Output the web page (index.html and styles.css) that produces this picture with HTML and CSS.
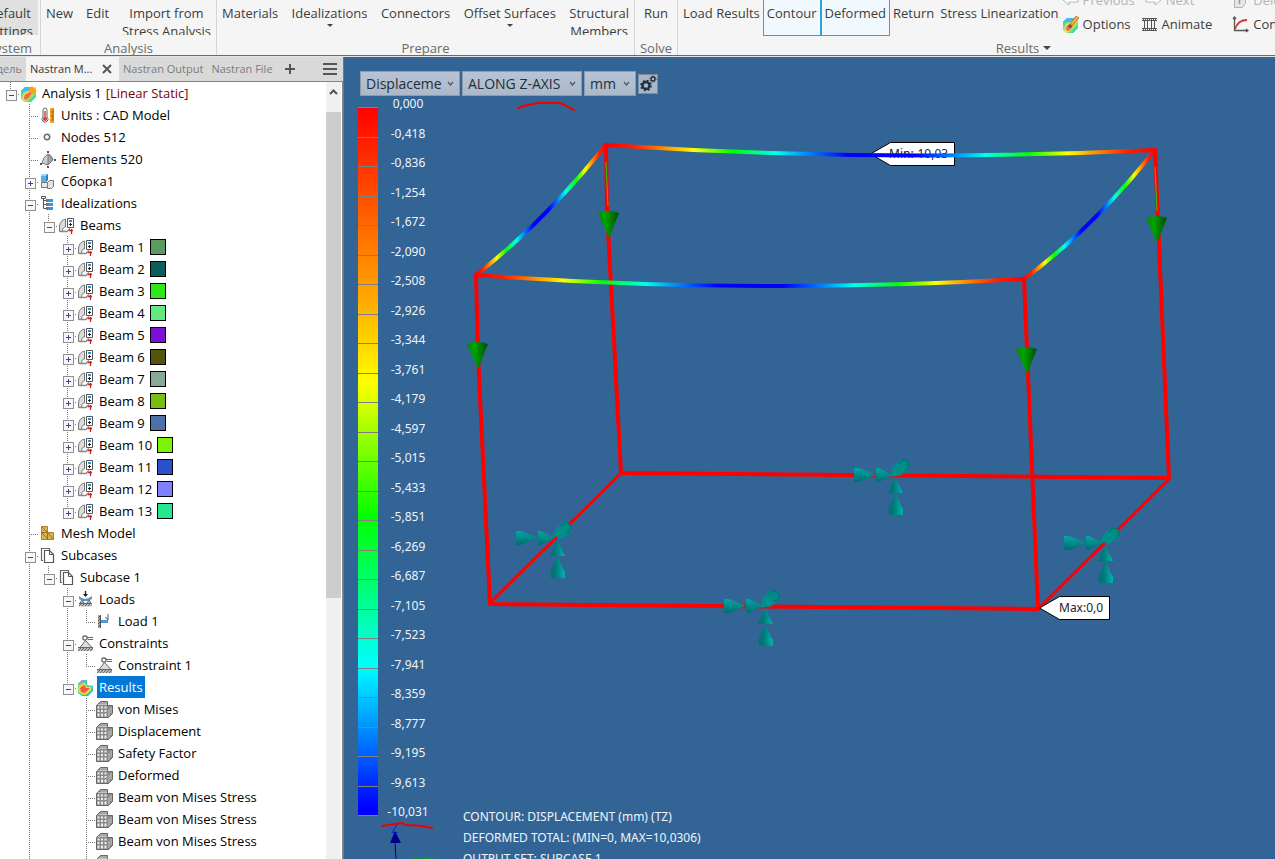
FILE: index.html
```html
<!DOCTYPE html>
<html lang="en">
<head>
<meta charset="utf-8">
<title>Nastran Analysis</title>
<link rel="stylesheet" href="styles.css">
</head>
<body>
<svg class="defs" aria-hidden="true">
  <defs>
    <linearGradient id="heat" x1="0" y1="0" x2="1" y2="1">
      <stop offset="0" stop-color="#2fa8e8"/><stop offset=".3" stop-color="#5fe0a0"/><stop offset=".55" stop-color="#e8e840"/><stop offset=".8" stop-color="#30d8a0"/><stop offset="1" stop-color="#10b8e0"/>
    </linearGradient>
    <symbol id="i-cube" viewBox="0 0 17 17">
      <path d="M1 6 5 2h8l3 2v8l-5 5H4l-3-3z" fill="url(#heat)"/>
      <path d="M1 6 5 2h8l-4 4H1z" fill="#48b8e8"/>
      <path d="M3 13q-1-5 4-6 4-3 6-2-1 8-8 11-2-1-2-3z" fill="#f4e23c"/>
      <path d="M4 13q0-4 4-5 3-2 4-1-1 5-6 8-2 0-2-2z" fill="#f06a50"/>
    </symbol>
    <symbol id="i-analysis" viewBox="0 0 17 17">
      <use href="#i-cube" width="17" height="17"/>
      <path d="M12 0l1 3 3-1-1 3 2 1-2 1 1 3-3-2-2 2V7L8 6l2-1-1-3 2 1z" fill="#f7a21b"/>
    </symbol>
    <symbol id="i-results" viewBox="0 0 17 17">
      <path d="M1 5 5 1h5v5l6 1v5l-5 5H5l-4-3z" fill="#18c4d8"/>
      <path d="M1 5 5 1h5L8 5z" fill="#74a9e0"/>
      <path d="M1 6l7-3 2 4 5 1-1 4-5 4H5l-4-3z" fill="#a6e04a"/>
      <path d="M2 8l5-4 2 4 6 0-3 5-4 2H5l-3-2z" fill="#f6d432"/>
      <path d="M3 9l4-3 2 3 4 0-3 3-3 2-3-1z" fill="#f05a4e"/>
    </symbol>
    <symbol id="i-units" viewBox="0 0 17 17">
      <rect x="11" y="1" width="4" height="15" fill="#f2a71d"/><path d="M13 3h2M12 5h3M13 7h2M12 9h3M13 11h2M12 13h3" stroke="#8a5a00"/>
      <path d="M4 10V3a2 2 0 0 1 4 0v7a3 3 0 1 1-4 0z" fill="#fff" stroke="#666"/><circle cx="6" cy="12" r="2" fill="#d83a3a"/><path d="M6 4v8" stroke="#d83a3a" stroke-width="1.4"/>
    </symbol>
    <symbol id="i-node" viewBox="0 0 17 17"><circle cx="8" cy="8" r="2.7" fill="#fff" stroke="#666" stroke-width="1.5"/></symbol>
    <symbol id="i-element" viewBox="0 0 17 17">
      <path d="M9 3Q4 6 3 12l6 2 5-5Q13 5 9 3z" fill="#cfcfcf" stroke="#777"/><path d="M9 3v11l5-5q-1-4-5-6z" fill="#a4a4a4" stroke="#777"/>
      <path d="M8 0h2v2H8zM1 12h2v2H1zM8 15h2v2H8zM15 8h2v2h-2z" fill="#555"/>
    </symbol>
    <symbol id="i-assembly" viewBox="0 0 17 17">
      <path d="M8.500 9.500l2-2h4v6l-2 2h-4z" fill="#e2e2e2" stroke="#777"/><path d="M2.500 9.500h6v5h-6z" fill="#e8e8e8" stroke="#777"/>
      <path d="M2 3 4 1h5v6L7 9H2z" fill="#5aaee8"/><path d="M2 3 4 1h5L7 3z" fill="#9dd2f4"/><path d="M7 3l2-2v6L7 9z" fill="#2b80bf"/>
    </symbol>
    <symbol id="i-ideal" viewBox="0 0 17 17">
      <path d="M2.500 1.500h4v2h-4zM4.500 3.500v10h4M5 5.500h3M5 9.500h3" fill="none" stroke="#555"/>
      <path d="M8 4h6v3H8zM8 8h6v3H8zM8 12h6v3H8z" fill="#3c92d4"/><path d="M7 4h2v3H7zM7 8h2v3H7zM7 12h2v3H7z" fill="#777"/>
    </symbol>
    <symbol id="i-beam" viewBox="0 0 17 17">
      <path d="M1.500 14.500V9q1-6 6-7v8q-3 0-3 4.500z" fill="#ddd" stroke="#777"/><path d="M2 14.500h7l3-3" fill="none" stroke="#888" stroke-width="1.500"/>
      <path d="M9.500 1.500h6v9h-6z" fill="#fff" stroke="#555"/><path d="M11 3h3v2h-3z" fill="#2c8ee0"/><path d="M11 7.500h3M12.500 6v3" stroke="#222"/>
      <path d="M11 13.500h4M13.500 12v5" stroke="#d02020" stroke-width="1.300"/>
    </symbol>
    <symbol id="i-mesh" viewBox="0 0 17 17">
      <path d="M2.500 1.500h6v6h6v7h-12z" fill="#d9b454" stroke="#a88428"/><path d="M2.500 7.500h6v7M3 2l5 5M3 8l6 6M9 8l5 6" fill="none" stroke="#94711c"/>
    </symbol>
    <symbol id="i-case" viewBox="0 0 17 17">
      <path d="M4 13.500H2.500v-12h8v2" fill="none" stroke="#666" stroke-width="1.200"/><path d="M5.500 3.500h5l4 4v8h-9z" fill="#fff" stroke="#555" stroke-width="1.200"/><path d="M10.500 3.500v4h4" fill="none" stroke="#555"/>
    </symbol>
    <symbol id="i-loads" viewBox="0 0 17 17">
      <path d="M8.500 0v5" stroke="#222" stroke-width="1.400"/><path d="M6 3h5L8.500 6z" fill="#222"/>
      <path d="M2 5q3 3 6 3t7-3v3l-4 2H6L2 8z" fill="#4a9ad4"/><path d="M5 9l-2 3h4zM12 9l-2 3h4z" fill="#ddd" stroke="#666"/>
      <path d="M2 12.500h13v3H2z" fill="#bbb"/><path d="M2 15l3-3M5 15l3-3M8 15l3-3M11 15l3-3M2 12.500h13" stroke="#666"/>
    </symbol>
    <symbol id="i-load" viewBox="0 0 17 17">
      <path d="M2 2h2v13H2z" fill="#aaa"/><path d="M2 5l2-2M2 8l2-2M2 11l2-2M2 14l2-2M4.500 2v13" stroke="#555"/>
      <path d="M5 7h7v3H5z" fill="#4a9ad4"/><path d="M12 1v6M9.500 4 12 7" fill="none" stroke="#555"/>
    </symbol>
    <symbol id="i-constraint" viewBox="0 0 17 17">
      <circle cx="8" cy="3" r="2.200" fill="#fff" stroke="#555" stroke-width="1.200"/><path d="M10 2.500h6M11 4.500h5" stroke="#666"/>
      <path d="M8.500 5.500 3 12.500h12z" fill="#ddd" stroke="#666"/><path d="M1 13h15v3H1z" fill="#bbb"/><path d="M1 16l3-3M4 16l3-3M7 16l3-3M10 16l3-3M13 16l3-3M1 12.500h15" stroke="#666"/>
    </symbol>
    <symbol id="i-plot" viewBox="0 0 17 17">
      <path d="M.5 4.500 4.500.5h7v4h5v8l-4 4H.5z" fill="#8b8b8b" stroke="#666"/>
      <path d="M1.500 5.500h2v2h-2zM5 5.500h2v2H5zM8.500 5.500h2v2h-2zM1.500 9h2v2h-2zM5 9h2v2H5zM8.500 9h2v2h-2zM1.500 12.500h2v3h-2zM5 12.500h2v3H5zM8.500 12.500h2v3h-2zM4 2.500h2M8 2.500h2" fill="#eee"/>
      <path d="M2 3.500h9M13 8v7M15 6v6M4 2h7" stroke="#ddd" stroke-width=".7"/>
    </symbol>
    <symbol id="i-film" viewBox="0 0 17 17">
      <path d="M1 3.500h15M1 13.500h15" stroke="#555" stroke-width="3"/><path d="M1 3.500h15M1 13.500h15" stroke="#fff" stroke-dasharray="1 1"/><path d="M3.500 5v7M6.500 5v7M10.500 5v7M13.500 5v7" stroke="#555"/>
    </symbol>
    <symbol id="i-graph" viewBox="0 0 17 17">
      <path d="M2.500 1v13.500H16M1 3l1.500-2L4 3M14 13l2 1.500-2 1.500" fill="none" stroke="#555" stroke-width="1.300"/><path d="M3 13q3-9 12-9" fill="none" stroke="#c8383c" stroke-width="1.800"/>
    </symbol>
    <symbol id="i-brush" viewBox="0 0 17 17">
      <use href="#i-cube" width="17" height="17"/><path d="M8 8l6-8 3 2-7 8z" fill="#f0b040" stroke="#9c6420" stroke-width=".7"/><path d="M6 11l2-3 2 2-1 2z" fill="#555"/>
    </symbol>
    <symbol id="i-prev" viewBox="0 0 17 17"><path d="M1 8l6-5v3h9v4H7v3z" fill="#fff" stroke="#b4b4b4"/></symbol>
    <symbol id="i-next" viewBox="0 0 17 17"><path d="M16 8l-6-5v3H1v4h9v3z" fill="#fff" stroke="#b4b4b4"/></symbol>
    <symbol id="i-del" viewBox="0 0 17 17"><path d="M2.500 4.500h9l2-2v9l-3 4h-8z" fill="#e6e6e6" stroke="#b4b4b4"/><path d="M7.500 7v5" stroke="#999" stroke-width="1.500"/></symbol>
    <symbol id="i-gears" viewBox="0 0 17 17">
      <circle cx="6" cy="10.500" r="3.500" fill="none" stroke="#20303f" stroke-width="2.400"/><circle cx="6" cy="10.500" r="5" fill="none" stroke="#20303f" stroke-width="1.600" stroke-dasharray="2 1.930"/>
      <circle cx="13" cy="4" r="2" fill="none" stroke="#20303f" stroke-width="1.300"/><circle cx="13" cy="4" r="3" fill="none" stroke="#20303f" stroke-dasharray="1.200 1.150"/>
    </symbol>
  </defs>
</svg>

<div class="app">
  <header class="ribbon">
    <section class="group group--system">
      <div class="group__tools"><button class="tool tool--pressed"><span>Default</span><span>Settings</span></button></div>
      <h2 class="group__title">System</h2>
    </section>
    <section class="group group--analysis">
      <div class="group__tools"><button class="tool">New</button><button class="tool">Edit</button><button class="tool"><span>Import from</span><span>Stress Analysis</span></button></div>
      <h2 class="group__title">Analysis</h2>
    </section>
    <section class="group group--prepare">
      <div class="group__tools"><button class="tool">Materials</button><button class="tool">Idealizations<span class="caret"></span></button><button class="tool">Connectors</button><button class="tool">Offset Surfaces<span class="caret"></span></button><button class="tool"><span>Structural</span><span>Members</span></button></div>
      <h2 class="group__title">Prepare</h2>
    </section>
    <section class="group group--solve">
      <div class="group__tools"><button class="tool">Run</button></div>
      <h2 class="group__title">Solve</h2>
    </section>
    <section class="group group--results">
      <div class="group__tools">
        <button class="tool">Load Results</button><button class="tool tool--on">Contour</button><button class="tool tool--on">Deformed</button><button class="tool">Return</button><button class="tool">Stress Linearization</button>
        <div class="stack">
          <div class="stack__row"><button class="mini" disabled><svg class="icon"><use href="#i-prev"/></svg>Previous</button><button class="mini" disabled><svg class="icon"><use href="#i-next"/></svg>Next</button></div>
          <div class="stack__row"><button class="mini"><svg class="icon"><use href="#i-brush"/></svg>Options</button><button class="mini"><svg class="icon"><use href="#i-film"/></svg>Animate</button></div>
        </div>
        <div class="stack">
          <div class="stack__row"><button class="mini" disabled><svg class="icon"><use href="#i-del"/></svg>Delete</button></div>
          <div class="stack__row"><button class="mini"><svg class="icon"><use href="#i-graph"/></svg>Convergence</button></div>
        </div>
      </div>
      <h2 class="group__title">Results<span class="caret caret--big"></span></h2>
    </section>
  </header>

  <main class="workspace">
    <aside class="browser">
      <nav class="tabs">
        <button class="tab tab--model"><span>Модель</span></button>
        <button class="tab tab--active">Nastran M...<svg class="tab__close" viewBox="0 0 10 10"><path d="M1 1l8 8M9 1 1 9"/></svg></button>
        <button class="tab">Nastran Output</button>
        <button class="tab">Nastran File</button>
        <button class="tabs__add" aria-label="Add tab"><svg viewBox="0 0 10 10"><path d="M5 0v10M0 5h10"/></svg></button>
        <button class="tabs__menu" aria-label="Menu"><svg viewBox="0 0 14 12"><path d="M0 1h14M0 6h14M0 11h14"/></svg></button>
      </nav>
      <div class="browser__body">
        <ul class="tree">
          <li class="node node--end"><div class="row"><button class="exp exp--minus" aria-label="Collapse"></button><svg class="icon"><use href="#i-analysis"/></svg><span class="label">Analysis 1</span><span class="note">[Linear Static]</span></div>
            <ul>
              <li class="node"><div class="row"><i class="stub"></i><svg class="icon"><use href="#i-units"/></svg><span class="label">Units : CAD Model</span></div></li>
              <li class="node"><div class="row"><i class="stub"></i><svg class="icon"><use href="#i-node"/></svg><span class="label">Nodes 512</span></div></li>
              <li class="node"><div class="row"><i class="stub"></i><svg class="icon"><use href="#i-element"/></svg><span class="label">Elements 520</span></div></li>
              <li class="node"><div class="row"><button class="exp" aria-label="Expand"></button><svg class="icon"><use href="#i-assembly"/></svg><span class="label">Сборка1</span></div></li>
              <li class="node"><div class="row"><button class="exp exp--minus" aria-label="Collapse"></button><svg class="icon"><use href="#i-ideal"/></svg><span class="label">Idealizations</span></div>
                <ul><li class="node node--end"><div class="row"><button class="exp exp--minus" aria-label="Collapse"></button><svg class="icon"><use href="#i-beam"/></svg><span class="label">Beams</span></div>
                  <ul>
                    <li class="node"><div class="row"><button class="exp" aria-label="Expand"></button><svg class="icon"><use href="#i-beam"/></svg><span class="label">Beam 1</span><span class="swatch" style="background:#5b9a60"></span></div></li>
                    <li class="node"><div class="row"><button class="exp" aria-label="Expand"></button><svg class="icon"><use href="#i-beam"/></svg><span class="label">Beam 2</span><span class="swatch" style="background:#0d5c5c"></span></div></li>
                    <li class="node"><div class="row"><button class="exp" aria-label="Expand"></button><svg class="icon"><use href="#i-beam"/></svg><span class="label">Beam 3</span><span class="swatch" style="background:#2ee81c"></span></div></li>
                    <li class="node"><div class="row"><button class="exp" aria-label="Expand"></button><svg class="icon"><use href="#i-beam"/></svg><span class="label">Beam 4</span><span class="swatch" style="background:#64e880"></span></div></li>
                    <li class="node"><div class="row"><button class="exp" aria-label="Expand"></button><svg class="icon"><use href="#i-beam"/></svg><span class="label">Beam 5</span><span class="swatch" style="background:#7c10d4"></span></div></li>
                    <li class="node"><div class="row"><button class="exp" aria-label="Expand"></button><svg class="icon"><use href="#i-beam"/></svg><span class="label">Beam 6</span><span class="swatch" style="background:#54540c"></span></div></li>
                    <li class="node"><div class="row"><button class="exp" aria-label="Expand"></button><svg class="icon"><use href="#i-beam"/></svg><span class="label">Beam 7</span><span class="swatch" style="background:#88a898"></span></div></li>
                    <li class="node"><div class="row"><button class="exp" aria-label="Expand"></button><svg class="icon"><use href="#i-beam"/></svg><span class="label">Beam 8</span><span class="swatch" style="background:#78bc14"></span></div></li>
                    <li class="node"><div class="row"><button class="exp" aria-label="Expand"></button><svg class="icon"><use href="#i-beam"/></svg><span class="label">Beam 9</span><span class="swatch" style="background:#4c70a8"></span></div></li>
                    <li class="node"><div class="row"><button class="exp" aria-label="Expand"></button><svg class="icon"><use href="#i-beam"/></svg><span class="label">Beam 10</span><span class="swatch" style="background:#7cf408"></span></div></li>
                    <li class="node"><div class="row"><button class="exp" aria-label="Expand"></button><svg class="icon"><use href="#i-beam"/></svg><span class="label">Beam 11</span><span class="swatch" style="background:#2c50cc"></span></div></li>
                    <li class="node"><div class="row"><button class="exp" aria-label="Expand"></button><svg class="icon"><use href="#i-beam"/></svg><span class="label">Beam 12</span><span class="swatch" style="background:#8080fc"></span></div></li>
                    <li class="node node--end"><div class="row"><button class="exp" aria-label="Expand"></button><svg class="icon"><use href="#i-beam"/></svg><span class="label">Beam 13</span><span class="swatch" style="background:#24e890"></span></div></li>
                  </ul></li></ul>
              </li>
              <li class="node"><div class="row"><i class="stub"></i><svg class="icon"><use href="#i-mesh"/></svg><span class="label">Mesh Model</span></div></li>
              <li class="node"><div class="row"><button class="exp exp--minus" aria-label="Collapse"></button><svg class="icon"><use href="#i-case"/></svg><span class="label">Subcases</span></div>
                <ul><li class="node node--end"><div class="row"><button class="exp exp--minus" aria-label="Collapse"></button><svg class="icon"><use href="#i-case"/></svg><span class="label">Subcase 1</span></div>
                  <ul>
                    <li class="node"><div class="row"><button class="exp exp--minus" aria-label="Collapse"></button><svg class="icon"><use href="#i-loads"/></svg><span class="label">Loads</span></div>
                      <ul><li class="node node--end"><div class="row"><i class="stub"></i><svg class="icon"><use href="#i-load"/></svg><span class="label">Load 1</span></div></li></ul></li>
                    <li class="node"><div class="row"><button class="exp exp--minus" aria-label="Collapse"></button><svg class="icon"><use href="#i-constraint"/></svg><span class="label">Constraints</span></div>
                      <ul><li class="node node--end"><div class="row"><i class="stub"></i><svg class="icon"><use href="#i-constraint"/></svg><span class="label">Constraint 1</span></div></li></ul></li>
                    <li class="node node--end"><div class="row"><button class="exp exp--minus" aria-label="Collapse"></button><svg class="icon"><use href="#i-results"/></svg><span class="label label--selected">Results</span></div>
                      <ul>
                        <li class="node"><div class="row"><i class="stub"></i><svg class="icon"><use href="#i-plot"/></svg><span class="label">von Mises</span></div></li>
                        <li class="node"><div class="row"><i class="stub"></i><svg class="icon"><use href="#i-plot"/></svg><span class="label">Displacement</span></div></li>
                        <li class="node"><div class="row"><i class="stub"></i><svg class="icon"><use href="#i-plot"/></svg><span class="label">Safety Factor</span></div></li>
                        <li class="node"><div class="row"><i class="stub"></i><svg class="icon"><use href="#i-plot"/></svg><span class="label">Deformed</span></div></li>
                        <li class="node"><div class="row"><i class="stub"></i><svg class="icon"><use href="#i-plot"/></svg><span class="label">Beam von Mises Stress</span></div></li>
                        <li class="node"><div class="row"><i class="stub"></i><svg class="icon"><use href="#i-plot"/></svg><span class="label">Beam von Mises Stress</span></div></li>
                        <li class="node"><div class="row"><i class="stub"></i><svg class="icon"><use href="#i-plot"/></svg><span class="label">Beam von Mises Stress</span></div></li>
                        <li class="node"><div class="row"><i class="stub"></i><svg class="icon"><use href="#i-plot"/></svg><span class="label">Beam von Mises Stress</span></div></li>
                      </ul></li>
                  </ul></li></ul>
              </li>
            </ul>
          </li>
        </ul>
        <div class="scroll"><button class="scroll__up" aria-label="Scroll up"><svg viewBox="0 0 9 6"><path d="M1 5l3.500-3.500L8 5"/></svg></button><div class="scroll__thumb"></div></div>
      </div>
    </aside>

    <section class="viewport">
      <svg class="scene" viewBox="344 57 931 802">
        <defs>
          <linearGradient id="ramp">
            <stop offset="0" stop-color="#f00"/><stop offset=".05" stop-color="#ff2000"/><stop offset=".1" stop-color="#ff8000"/><stop offset=".16" stop-color="#ff0"/><stop offset=".23" stop-color="#0f0"/><stop offset=".31" stop-color="#0fe"/><stop offset=".37" stop-color="#0080ff"/><stop offset=".44" stop-color="#00f"/>
            <stop offset=".56" stop-color="#00f"/><stop offset=".63" stop-color="#0080ff"/><stop offset=".69" stop-color="#0fe"/><stop offset=".77" stop-color="#0f0"/><stop offset=".84" stop-color="#ff0"/><stop offset=".9" stop-color="#ff8000"/><stop offset=".95" stop-color="#ff2000"/><stop offset="1" stop-color="#f00"/>
          </linearGradient>
          <linearGradient id="cone"><stop offset="0" stop-color="#008c00"/><stop offset=".35" stop-color="#00a400"/><stop offset="1" stop-color="#004c00"/></linearGradient>
          <linearGradient id="tealV"><stop offset="0" stop-color="#007070"/><stop offset=".4" stop-color="#007c7c"/><stop offset="1" stop-color="#00b4b0"/></linearGradient>
          <linearGradient id="tealH" x2="0" y2="1"><stop offset="0" stop-color="#00a8a4"/><stop offset="1" stop-color="#006c70"/></linearGradient>
          <g id="force"><path d="M-10-13Q0-17 11-13L1 12z" fill="url(#cone)"/></g>
          <g id="fix">
            <path d="M-41-7h4q3 0 3 7t-3 7h-4z" fill="url(#tealH)"/><path d="M-36-7-19 0l-17 7z" fill="url(#tealH)"/><path d="M-19-7h3L-2 0l-14 7h-3z" fill="url(#tealH)"/>
            <path d="M-7 18 0 2l8 16z" fill="url(#tealV)"/><path d="M-6 33h14v7H-6z" fill="url(#tealV)"/><path d="M-7 35 0 18l8 17z" fill="url(#tealV)"/>
            <circle cx="8" cy="-9" r="7" fill="#008a88"/><circle cx="9" cy="-10" r="5" fill="none" stroke="#006c70"/><circle cx="3" cy="-5" r="6" fill="#00908c"/><path d="M-4-4-4 2 5 0z" fill="#00908c"/>
          </g>
        </defs>
        <g class="callout"><path d="M870.500 154l20-11.500h64v23h-64z"/><text x="889" y="158">Min:-10,03</text></g>
        <g class="beams">
          <path d="M606 145l1 65 14 263 548 5-14-328M476 275l2 80 12 249 548 5-14-330"/>
          <path d="M621 473 490 603M1169 479l-131 130" stroke-width="3"/>
          <path d="M606 145Q880 163 1155 150" stroke="url(#ramp)"/>
          <path d="M476 275Q750 295 1024 279" stroke="url(#ramp)"/>
          <path d="M476 275Q544 222 606 145" stroke="url(#ramp)"/>
          <path d="M1024 279Q1093 228 1155 150" stroke="url(#ramp)"/>
        </g>
        <path d="M606 162l2 44M1155 167l2 44" stroke="#35c900"/>
        <use href="#force" x="608" y="226"/><use href="#force" x="1156" y="231"/><use href="#force" x="477" y="357"/><use href="#force" x="1026" y="362"/>
        <use href="#fix" x="895" y="475"/><use href="#fix" x="765" y="606"/><use href="#fix" x="557" y="538"/><use href="#fix" x="1105" y="543"/>
        <path d="M544 550l13-13M1092 556l13-13" stroke="#f00" stroke-width="3"/>
        <g class="callout"><path d="M1039.500 608l20-11.500h50v23h-50z"/><text x="1059" y="612">Max:0,0</text></g>
        <path class="marker" d="M518 108q10-4 22-5h20q8 3 14 7"/>
        <text x="391" y="833" class="axis">Z</text>
        <path d="M390 843l5-12 6 12z" fill="#00008c"/><path d="M395 842l1 18" stroke="#00008c"/><path d="M414 858h22" stroke="#009c20" stroke-width="2" stroke-dasharray="6 4"/>
        <path class="marker" d="M382 826q11-2 20-3l3 2q15 0 27 3"/>
      </svg>
      <form class="filters">
        <select class="pick pick--type" aria-label="Result type"><option>Displaceme</option></select>
        <select class="pick pick--axis" aria-label="Direction"><option>ALONG Z-AXIS</option></select>
        <select class="pick pick--unit" aria-label="Unit"><option>mm</option></select>
        <button class="gear" type="button" aria-label="Settings"><svg class="icon"><use href="#i-gears"/></svg></button>
      </form>
      <div class="readout">
        <div class="bar"><i></i><i></i><i></i><i></i><i></i><i></i><i></i><i></i><i></i><i></i><i></i><i></i><i></i><i></i><i></i><i></i><i></i><i></i><i></i><i></i><i></i><i></i><i></i><i></i></div>
        <ol class="scale"><li>0,000</li><li>-0,418</li><li>-0,836</li><li>-1,254</li><li>-1,672</li><li>-2,090</li><li>-2,508</li><li>-2,926</li><li>-3,344</li><li>-3,761</li><li>-4,179</li><li>-4,597</li><li>-5,015</li><li>-5,433</li><li>-5,851</li><li>-6,269</li><li>-6,687</li><li>-7,105</li><li>-7,523</li><li>-7,941</li><li>-8,359</li><li>-8,777</li><li>-9,195</li><li>-9,613</li><li>-10,031</li></ol>
        <div class="info"><p>CONTOUR: DISPLACEMENT (mm) (TZ)</p><p>DEFORMED TOTAL: (MIN=0, MAX=10,0306)</p><p>OUTPUT SET: SUBCASE 1</p></div>
      </div>
    </section>
  </main>
</div>
</body>
</html>
```
FILE: styles.css
```css
* { box-sizing: border-box; }
body { margin: 0; font: 13px/18px "Open Sans", "Noto Sans", sans-serif; color: #3c3c3c; }
button { border: 0; padding: 0; margin: 0; background: none; font: inherit; color: inherit; }
ul, ol { list-style: none; margin: 0; padding: 0; }
h2, p { margin: 0; font: inherit; }
.defs { position: absolute; width: 0; height: 0; }
.icon { width: 17px; height: 17px; flex: none; }

.app { display: flex; flex-direction: column; height: 100vh; overflow: hidden; }

/* Ribbon */
.ribbon { display: flex; flex: none; height: 57px; overflow: hidden; background: #f5f5f5; border-bottom: 1px solid #e4e4e4; box-shadow: inset 0 -1px #0a8ac4; }
.group { display: flex; flex-direction: column; flex: none; border-right: 1px solid #d4d4d4; height: 55px; }
.group__tools { display: flex; height: 36px; overflow: hidden; justify-content: space-between; align-items: flex-start; }
.group__title { display: flex; justify-content: center; align-items: center; gap: 4px; height: 19px; line-height: 19px; padding-top: 5px; color: #6a6a6a; }
.group--system { width: 41px; align-items: flex-end; }
.group--system .group__title { padding-right: 8px; }
.group--analysis { width: 176px; }
.group--analysis .group__tools { padding: 0 5px; }
.group--prepare { width: 418px; }
.group--prepare .group__tools { padding: 0 5px; }
.group--solve { width: 43px; }
.group--solve .group__tools { justify-content: center; }
.group--results { width: 692px; }
.group--results .group__tools { justify-content: flex-start; padding-left: 2px; }
.tool { display: flex; flex-direction: column; align-items: center; justify-content: flex-start; padding-top: 4px; height: 35px; overflow: hidden; white-space: nowrap; flex: none; }
.tool--pressed { background: #e0e0e0; padding-right: 5px; margin-right: 2px; }
.group--results .tool { padding: 4px 3px 0; }
.group--results .tool--on { height: 36px; background: #f1f9ff; border: 1px solid #2ba4d8; border-top: 0; }
.caret { flex: none; width: 0; margin-top: 2px; border: 3px solid transparent; border-top-color: #444; border-bottom: 0; }
.caret--big { border-width: 4px; border-bottom: 0; margin: 0; }
.stack { display: flex; flex-direction: column; margin-top: -9px; gap: 6px; }
.stack + .stack { padding-left: 20px; }
.stack__row { display: flex; gap: 10px; }
.mini { display: flex; align-items: center; gap: 4px; height: 18px; white-space: nowrap; }
.mini:disabled { color: #b4b4b4; }

/* Browser panel */
.workspace { display: flex; flex: 1; min-height: 0; }
.browser { display: flex; flex-direction: column; flex: none; width: 344px; border-right: 1px solid #6f7a86; background: #fff; }
.tabs { display: flex; flex: none; align-items: stretch; height: 25px; background: #d9d9d9; border-bottom: 1px solid #858585; font-size: 11px; color: #7c7c7c; }
.tab { display: flex; align-items: center; padding: 0 4px; white-space: nowrap; }
.tab--model { width: 26px; justify-content: flex-end; overflow: hidden; }
.tab--active { background: #f5f5f5; color: #333; justify-content: space-between; width: 93px; padding-right: 7px; }
.tab__close { flex: none; width: 10px; height: 10px; stroke: #555; stroke-width: 2; }
.tabs__add { margin-left: 8px; }
.tabs__add svg { display: block; width: 10px; height: 10px; stroke: #555; stroke-width: 2; }
.tabs__menu { margin: 0 6px 0 auto; }
.tabs__menu svg { display: block; width: 14px; height: 12px; stroke: #555; stroke-width: 2; }
.browser__body { display: flex; flex: 1; min-height: 0; border-right: 1px solid #858585; }
.tree { flex: 1; overflow: hidden; color: #000; }
.tree ul { padding-left: 19px; }
.node { position: relative; }
.node::before { content: ""; position: absolute; left: 10px; top: 0; bottom: 0; width: 1px; background: repeating-linear-gradient(#777 0 1px, transparent 1px 2px); }
.node--end::before { bottom: auto; height: 12px; }
.row { display: flex; align-items: center; height: 22px; white-space: nowrap; }
.stub, .exp { position: relative; flex: none; width: 20px; height: 22px; }
.stub::before, .exp::before { content: ""; position: absolute; left: 10px; right: 0; top: 12px; height: 1px; background: repeating-linear-gradient(90deg, #777 0 1px, transparent 1px 2px); }
.exp::after { content: ""; position: absolute; left: 6px; top: 8px; width: 9px; height: 9px; border: 1px solid #8f8f8f; background: linear-gradient(#33489c, #33489c) center / 5px 1px no-repeat, linear-gradient(#33489c, #33489c) center / 1px 5px no-repeat, #f8f8f8; }
.exp--minus::after { background: linear-gradient(#33489c, #33489c) center / 5px 1px no-repeat, #f8f8f8; }
.label { padding: 0 2px; margin-left: 3px; line-height: 22px; }
.label--selected { background: #0078d7; color: #fff; }
.note { color: #800000; margin-left: 2px; }
.swatch { width: 16px; height: 16px; margin-left: 3px; border: 1px solid #000; }
.scroll { width: 15px; flex: none; margin-right: 1px; background: #f0f0f0; }
.scroll__up { display: flex; align-items: center; justify-content: center; width: 100%; height: 30px; padding-bottom: 10px; }
.scroll__up svg { width: 9px; height: 6px; fill: none; stroke: #505050; stroke-width: 2; }
.scroll__thumb { height: 486px; background: #cdcdcd; }

/* Viewport */
.viewport { position: relative; flex: 1; min-width: 0; overflow: hidden; background: #336496; padding: 14px 0 0 16px; color: #f0f4f8; }
.scene { position: absolute; left: 0; top: 0; width: 931px; height: 802px; }
.beams { fill: none; stroke: #f00; stroke-width: 4; stroke-linejoin: round; stroke-linecap: round; }
.callout path { fill: #fff; stroke: #000; }
.callout text { font: 12px "Noto Sans", sans-serif; fill: #222; }
.marker { fill: none; stroke: #f00000; stroke-width: 2; stroke-linecap: round; }
.axis { font: 12px "Noto Sans", sans-serif; fill: #1420e0; }
.filters { position: relative; display: flex; align-items: center; gap: 2px; height: 25px; }
.pick { appearance: none; height: 25px; padding: 0 5px; border: 1px solid #8e9bab; border-radius: 0; font: 14px "Open Sans", sans-serif; color: #222e3a; background: url("data:image/svg+xml,%3Csvg xmlns='http://www.w3.org/2000/svg' width='7' height='5'%3E%3Cpath d='M1 1l2.500 3L6 1' fill='none' stroke='%23556' stroke-width='1.300'/%3E%3C/svg%3E") right 5px top 9px no-repeat, linear-gradient(#b8c4d4, #aab8ca); }
.pick--type { width: 100px; }
.pick--axis { width: 120px; }
.pick--unit { width: 52px; }
.gear { display: flex; align-items: center; justify-content: center; width: 20px; height: 20px; background: #a9b7c9; border: 1px solid #7e8b9c; }
.readout { position: relative; display: flex; font: 12px/16px "Noto Sans", sans-serif; }
.bar { display: flex; flex-direction: column; flex: none; width: 20px; height: 709px; margin: 11px 0 0 -2px; border-bottom: 1px solid #808080; background: linear-gradient(#f00 0%, #ffa800 27%, #ff0 39%, #0f0 58%, #0ff 79%, #00f 99%); }
.bar i { flex: 1; border-top: 1px solid #808080; }
.scale { display: flex; flex-direction: column; justify-content: space-between; width: 60px; height: 724px; text-align: center; }
.info { align-self: flex-end; margin: 0 0 -49px 25px; line-height: 21px; white-space: nowrap; }
```
